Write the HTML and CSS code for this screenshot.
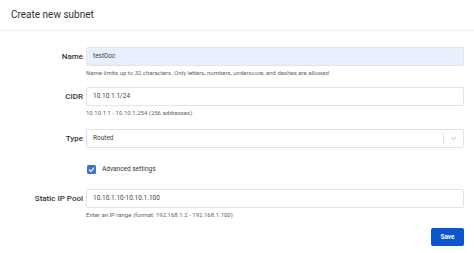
FILE: index.html
```html
<!DOCTYPE html>
<html>
<head>
<meta charset="utf-8">
<link rel="stylesheet" href="styles.css">
</head>
<body>
<div class="modal">
  <div class="header">Create new subnet</div>
  <form class="form">
    <div class="row row-name">
      <label class="label">Name</label>
      <div class="control">
        <div class="input filled">testDoc</div>
        <div class="help">Name limits up to 32 characters. Only letters, numbers, underscore, and dashes are allowed</div>
      </div>
    </div>
    <div class="row row-cidr">
      <label class="label">CIDR</label>
      <div class="control">
        <div class="input">10.10.1.1/24</div>
        <div class="help">10.10.1.1 - 10.10.1.254 (256 addresses)</div>
      </div>
    </div>
    <div class="row row-type">
      <label class="label">Type</label>
      <div class="control">
        <div class="input select">
          <span class="select-value">Routed</span>
          <span class="select-sep"></span>
          <svg class="chev" width="7" height="5" viewBox="0 0 7 5"><path d="M1 1.2 L3.5 3.6 L6 1.2" fill="none" stroke="#b5b5b5" stroke-width="0.9"/></svg>
        </div>
      </div>
    </div>
    <div class="row row-check">
      <span class="label"></span>
      <div class="control check-line">
        <span class="checkbox">
          <svg width="9" height="9" viewBox="0 0 9 9"><path d="M2 4.6 L3.8 6.3 L7.1 2.6" fill="none" stroke="#fff" stroke-width="1.2"/></svg>
        </span>
        <span class="check-text">Advanced settings</span>
      </div>
    </div>
    <div class="row row-pool">
      <label class="label">Static IP Pool</label>
      <div class="control">
        <div class="input">10.10.1.10-10.10.1.100</div>
        <div class="help">Enter an IP range (format: 192.168.1.2 - 192.168.1.100)</div>
      </div>
    </div>
    <div class="actions">
      <button type="button" class="save">Save</button>
    </div>
  </form>
</div>
</body>
</html>
```
FILE: styles.css
```css
* { box-sizing: border-box; }
html, body { margin: 0; padding: 0; background: #fff; }
body {
  font-family: Roboto, "Liberation Sans", sans-serif;
  color: #333;
  width: 474px;
  height: 253px;
  overflow: hidden;
}
.header {
  height: 31px;
  padding: 8px 0 0 11px;
  font-size: 10px;
  line-height: 14px;
  color: #2f2f2f;
  border-bottom: 1px solid #ececec;
}
.form {
  padding: 16px 10px 0 0;
  display: flex;
  flex-direction: column;
}
.row {
  display: flex;
  align-items: flex-start;
}
.label {
  width: 83px;
  flex: none;
  text-align: right;
  font-size: 8px;
  font-weight: 500;
  color: #333;
  line-height: 19px;
  padding-right: 0;
}
.control {
  flex: 1;
  margin-left: 3px;
}
.input {
  height: 19px;
  border: 1px solid #e3e3e3;
  border-radius: 2px;
  font-size: 6.5px;
  line-height: 17px;
  padding-left: 6px;
  color: #444;
  background: #fff;
}
.input.filled { background: #e8f0fe; }
.help {
  margin-top: 2px;
  font-size: 6px;
  line-height: 9px;
  color: #666;
}
.row-cidr { margin-top: 10px; }
.row-type { margin-top: 12px; }
.row-check { margin-top: 12px; height: 18px; }
.row-pool { margin-top: 11px; }
.select {
  display: flex;
  align-items: center;
  padding-right: 0;
}
.select-value { flex: 1; }
.select-sep {
  width: 1px;
  height: 11px;
  background: #e0e0e0;
}
.chev { margin: 0 6px 0 6px; }
.check-line {
  display: flex;
  align-items: center;
  height: 18px;
  margin-left: 4px;
}
.checkbox {
  width: 9px;
  height: 9px;
  border-radius: 1.5px;
  background: #3a72d8;
  display: flex;
}
.check-text {
  margin-left: 6px;
  font-size: 6.5px;
  color: #333;
}
.actions {
  display: flex;
  justify-content: flex-end;
  margin-top: 9px;
}
.save {
  width: 33px;
  height: 18px;
  border: none;
  border-radius: 2px;
  background: #0b55cc;
  color: #fff;
  font-family: Roboto, "Liberation Sans", sans-serif;
  font-size: 6.5px;
  font-weight: 700;
  padding: 0;
}
```
